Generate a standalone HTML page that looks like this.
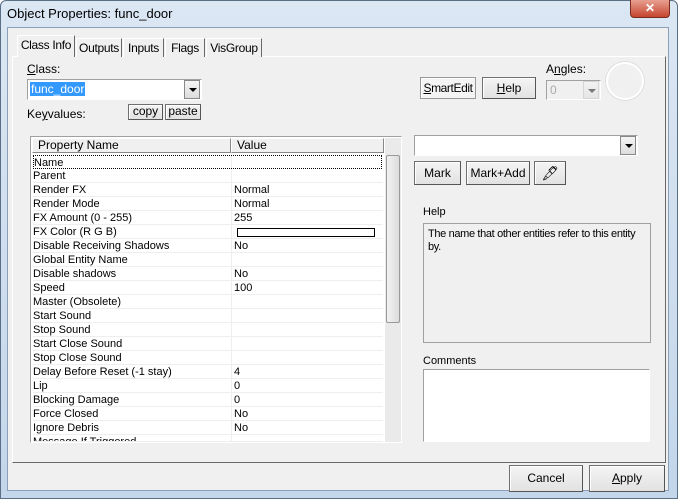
<!DOCTYPE html><html><head><style>
*{box-sizing:border-box}
body{margin:0;width:678px;height:499px;overflow:hidden;font-family:"Liberation Sans",sans-serif;font-size:11px;color:#000;background:#fff}
.win{position:absolute;left:0;top:0;width:678px;height:499px;background:linear-gradient(#dbe7f3,#c3d6ea);border:1px solid #5a6e85;border-radius:6px 6px 0 0}
.title{position:absolute;left:7px;top:6px;font-family:"Liberation Sans",sans-serif;font-size:13px}
.close{position:absolute;left:630px;top:0;width:40px;height:18px;background:linear-gradient(#e8a090,#c5452f);border:1px solid #7a2c20;border-top:0;border-radius:0 0 4px 4px;color:#fff;font-weight:bold;text-align:center;line-height:16px;font-size:12px}
.body{position:absolute;left:7px;top:27px;width:662px;height:464px;background:#f0f0f0;border:1px solid #8aa0b8}
.a{position:absolute}
.btn{position:absolute;background:linear-gradient(#f4f4f4,#e2e2e2);border:1px solid #707070;border-right-color:#555;border-bottom-color:#555;box-shadow:inset 1px 1px #fff;text-align:center;font-size:12px}
.panel{position:absolute;left:12px;top:56px;width:654px;height:407px;border:1px solid #fff;border-right-color:#696969;border-bottom-color:#696969}
.tab{position:absolute;top:38px;height:19px;border:1px solid #fff;border-right-color:#696969;border-bottom:0;padding-top:2px;text-align:center;font-size:12px;background:#f0f0f0;white-space:nowrap;letter-spacing:-0.3px}
.sunk{position:absolute;border:1px solid #a0a0a0;border-right-color:#fff;border-bottom-color:#fff;background:#fff}
.row{position:absolute;left:33px;height:14px;width:350px;border-bottom:1px solid #eee;font-size:11px;line-height:14px}
.row span{position:absolute;left:201px}
.dd{position:absolute;width:16px;height:18px;background:linear-gradient(#f4f4f4,#ddd);border:1px solid #888}
.dd:after{content:"";position:absolute;left:4px;top:7px;border:4px solid transparent;border-top:4px solid #000;border-bottom:0}
</style></head><body>
<div class="win"></div>
<div class="title">Object Properties: func_door</div>
<div class="close">✕</div>
<div class="body"></div>
<div class="panel"></div>
<div class="tab" style="left:17px;top:35px;width:58px;height:22px;z-index:2">Class Info</div>
<div class="tab" style="left:76px;width:46px">Outputs</div>
<div class="tab" style="left:123px;width:41px">Inputs</div>
<div class="tab" style="left:165px;width:40px">Flags</div>
<div class="tab" style="left:206px;width:56px">VisGroup</div>
<div class="a" style="left:27px;top:62px;font-size:12px"><u>C</u>lass:</div>
<div class="sunk" style="left:27px;top:79px;width:175px;height:21px"><span style="position:absolute;left:2px;top:2px;background:#3399ff;color:#fff;font-size:12px;padding:0 1px">func_door</span></div>
<div class="dd" style="left:184px;top:80px;height:19px"></div>
<div class="a" style="left:27px;top:107px;font-size:12px">Ke<u>y</u>values:</div>
<div class="btn" style="left:128px;top:104px;width:35px;height:16px;line-height:13px">copy</div>
<div class="btn" style="left:165px;top:104px;width:36px;height:16px;line-height:13px">paste</div>
<div class="btn" style="left:420px;top:77px;width:56px;height:22px;line-height:20px;background:#f4f4f4;border-color:#999;letter-spacing:-0.4px"><u>S</u>martEdit</div>
<div class="btn" style="left:482px;top:77px;width:54px;height:22px;line-height:20px"><u>H</u>elp</div>
<div class="a" style="left:546px;top:62px;font-size:12px">A<u>n</u>gles:</div>
<div class="sunk" style="left:546px;top:80px;width:55px;height:20px;background:#f0f0f0;color:#aaa;font-size:12px;padding:2px 3px">0</div>
<div class="dd" style="left:583px;top:81px;border-color:#bbb;opacity:.5"></div>
<div class="a" style="left:606px;top:62px;width:38px;height:38px;border:2px solid #fff;border-radius:50%;box-shadow:0 0 0 1px #ddd"></div>
<div class="sunk" style="left:30px;top:136px;width:372px;height:307px"></div>
<div class="a" style="left:32px;top:138px;width:199px;height:15px;border:1px solid #fff;border-right-color:#888;border-bottom-color:#888;background:#f0f0f0;padding-left:5px;font-size:12px;line-height:13px">Property Name</div>
<div class="a" style="left:231px;top:138px;width:153px;height:15px;border:1px solid #fff;border-right-color:#888;border-bottom-color:#888;background:#f0f0f0;padding-left:5px;font-size:12px;line-height:13px">Value</div>
<div class="a" style="left:385px;top:138px;width:16px;height:304px;background:#eaeaea"></div>
<div class="a" style="left:386px;top:155px;width:14px;height:168px;background:linear-gradient(90deg,#f2f2f2,#dcdcdc);border:1px solid #999;border-radius:2px"></div>
<div class="a" style="left:231px;top:153px;width:1px;height:289px;background:#eee"></div>
<div class="row" style="top:155px;border:1px dotted #000;width:349px">Name</div>
<div class="row" style="top:169px">Parent</div>
<div class="row" style="top:183px">Render FX<span>Normal</span></div>
<div class="row" style="top:197px">Render Mode<span>Normal</span></div>
<div class="row" style="top:211px">FX Amount (0 - 255)<span>255</span></div>
<div class="row" style="top:225px">FX Color (R G B)<span style="left:204px;top:3px;width:138px;height:9px;border:1px solid #000"></span></div>
<div class="row" style="top:239px">Disable Receiving Shadows<span>No</span></div>
<div class="row" style="top:253px">Global Entity Name</div>
<div class="row" style="top:267px">Disable shadows<span>No</span></div>
<div class="row" style="top:281px">Speed<span>100</span></div>
<div class="row" style="top:295px">Master (Obsolete)</div>
<div class="row" style="top:309px">Start Sound</div>
<div class="row" style="top:323px">Stop Sound</div>
<div class="row" style="top:337px">Start Close Sound</div>
<div class="row" style="top:351px">Stop Close Sound</div>
<div class="row" style="top:365px">Delay Before Reset (-1 stay)<span>4</span></div>
<div class="row" style="top:379px">Lip<span>0</span></div>
<div class="row" style="top:393px">Blocking Damage<span>0</span></div>
<div class="row" style="top:407px">Force Closed<span>No</span></div>
<div class="row" style="top:421px">Ignore Debris<span>No</span></div>
<div class="row" style="top:435px;height:7px;overflow:hidden">Message If Triggered</div>
<div class="sunk" style="left:414px;top:135px;width:224px;height:21px"></div>
<div class="dd" style="left:620px;top:136px;height:19px"></div>
<div class="btn" style="left:414px;top:161px;width:47px;height:24px;line-height:22px">Mark</div>
<div class="btn" style="left:466px;top:161px;width:64px;height:24px;line-height:22px">Mark+Add</div>
<div class="btn" style="left:534px;top:161px;width:32px;height:24px;font-size:14px;line-height:22px">🖋</div>
<div class="a" style="left:423px;top:206px;font-size:11px">Help</div>
<div class="a" style="left:423px;top:223px;width:228px;height:120px;border:1px solid #a0a0a0;padding:4px 4px;font-size:11px;line-height:13px;letter-spacing:-0.35px">The name that other entities refer to this entity by.</div>
<div class="a" style="left:423px;top:355px">Comments</div>
<div class="sunk" style="left:423px;top:369px;width:227px;height:73px"></div>
<div class="btn" style="left:509px;top:465px;width:74px;height:27px;line-height:25px">Cancel</div>
<div class="btn" style="left:589px;top:465px;width:76px;height:27px;line-height:25px"><u>A</u>pply</div>
</body></html>
